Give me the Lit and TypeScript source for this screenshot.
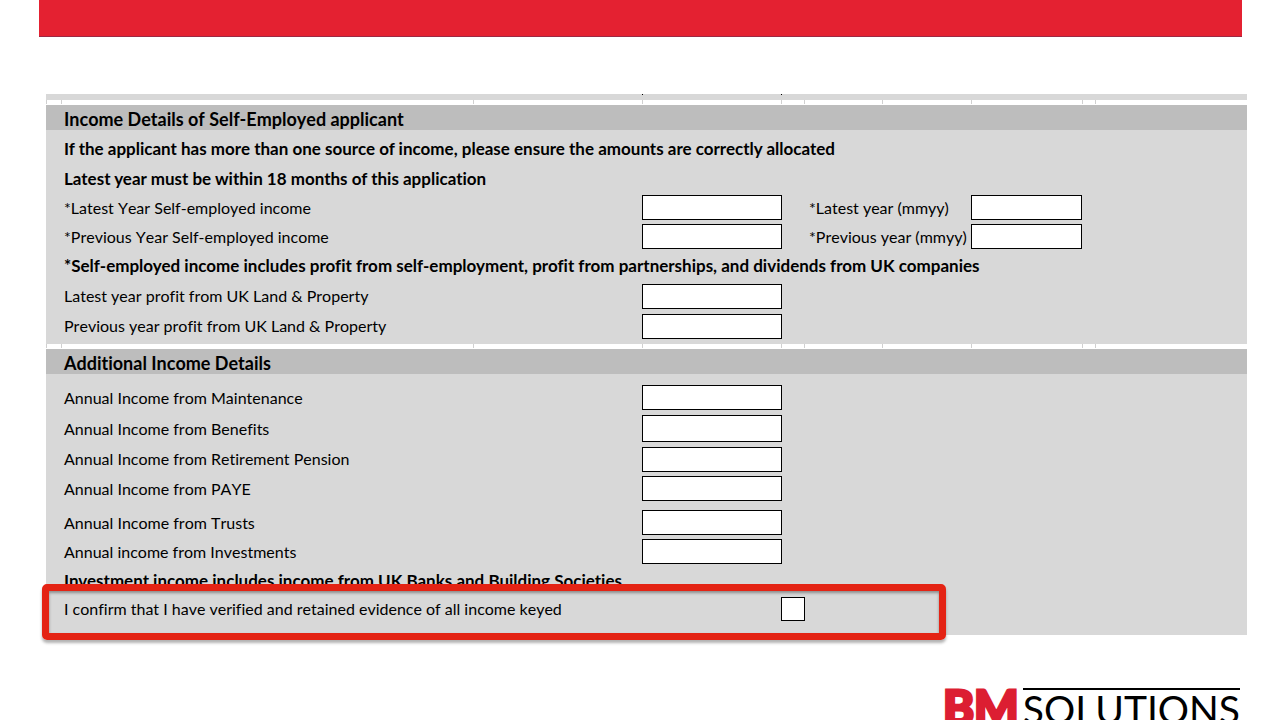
import { LitElement, html, css, nothing } from "lit";
import { customElement } from "lit/decorators.js";

type Row = {
  kind: "note" | "field" | "confirm";
  text: string;
  id?: string;
  size?: string;
  side?: { id: string; text: string };
};

const selfEmployed: Row[] = [
  { kind: "note", text: "If the applicant has more than one source of income, please ensure the amounts are correctly allocated" },
  { kind: "note", text: "Latest year must be within 18 months of this application", size: "tight" },
  { kind: "field", id: "latest-income", text: "*Latest Year Self-employed income", size: "tight", side: { id: "latest-year", text: "*Latest year (mmyy)" } },
  { kind: "field", id: "previous-income", text: "*Previous Year Self-employed income", size: "tight", side: { id: "previous-year", text: "*Previous year (mmyy)" } },
  { kind: "note", text: "*Self-employed income includes profit from self-employment, profit from partnerships, and dividends from UK companies" },
  { kind: "field", id: "latest-property", text: "Latest year profit from UK Land & Property" },
  { kind: "field", id: "previous-property", text: "Previous year profit from UK Land & Property" },
];

const additional: Row[] = [
  { kind: "field", id: "maintenance", text: "Annual Income from Maintenance", size: "roomy" },
  { kind: "field", id: "benefits", text: "Annual Income from Benefits", size: "roomy tall" },
  { kind: "field", id: "pension", text: "Annual Income from Retirement Pension" },
  { kind: "field", id: "paye", text: "Annual Income from PAYE", size: "tight" },
  { kind: "field", id: "trusts", text: "Annual Income from Trusts", size: "tight spaced" },
  { kind: "field", id: "investments", text: "Annual income from Investments", size: "tight" },
  { kind: "note", text: "Investment income includes income from UK Banks and Building Societies" },
  { kind: "confirm", id: "confirm", text: "I confirm that I have verified and retained evidence of all income keyed" },
];

@customElement("app-root")
export class AppRoot extends LitElement {
  static styles = css`
    :host {
      display: block;
      font-family: Lato, "Open Sans", sans-serif;
      font-size: 16px;
      line-height: 20px;
      font-kerning: none;
      font-variant-ligatures: none;
      color: #000;
      background: #fff;
    }
    * { box-sizing: border-box; }
    .slide {
      display: flex;
      flex-direction: column;
      height: 100vh;
      overflow: hidden;
    }
    .banner {
      flex: none;
      height: 37px;
      margin: 0 38px 57px 39px;
      background: #e42131;
      border-bottom: 1px solid #9c2844;
    }
    .sheet {
      flex: none;
      margin: 0 33px 53px 46px;
      background: #d8d8d8;
    }
    .strip {
      display: grid;
      grid-template-columns: 596fr 139fr 466fr;
      height: 6px;
    }
    .mark { height: 1px; border-left: 1px solid #000; }
    .rule {
      display: grid;
      grid-template-columns: 15fr 412fr 169fr 139fr 23fr 78fr 89fr 111fr 13fr 152fr;
      height: 5px;
      background: #fff;
    }
    .tick { height: 4px; border-left: 1px solid #d0d0d0; }
    .title {
      margin: 0;
      padding: 4px 18px 1px;
      background: #bdbdbd;
      font-size: 18px;
      line-height: 20px;
      font-weight: 700;
    }
    .first { padding: 4px 0 3px; }
    .second { padding: 8px 0 13px; }
    .row {
      position: relative;
      display: grid;
      grid-template-columns: 578fr 140fr 27fr 162fr 111fr 165fr;
      align-items: center;
      min-height: 30px;
      padding-left: 18px;
    }
    .tight { min-height: 29px; }
    .roomy { min-height: 31px; }
    .spaced { margin-top: 5px; }
    .note {
      display: flex;
      font-size: 17px;
      font-weight: 700;
      font-kerning: normal;
      white-space: nowrap;
    }
    .note p { margin: 0; }
    label { white-space: nowrap; }
    .side { grid-column: 4; }
    .box {
      width: 100%;
      height: 25px;
      margin: 0;
      padding: 0 4px;
      border: 1px solid #000;
      border-radius: 0;
      background: #fff;
      font: inherit;
      outline: none;
    }
    .tall .box { height: 27px; }
    .confirm {
      grid-template-columns: 717fr 466fr;
      min-height: 26px;
    }
    .check {
      appearance: none;
      width: 24px;
      height: 24px;
      margin: 0;
      border: 1px solid #000;
      background: #fff;
    }
    .highlight {
      position: absolute;
      inset: -12px 301px -18px -4px;
      border: 7px solid #e42314;
      border-radius: 5px;
      box-shadow: 0 3px 3px rgba(0, 0, 0, 0.3), inset 0 2px 3px rgba(0, 0, 0, 0.35);
      pointer-events: none;
    }
    .logo {
      flex: none;
      display: flex;
      align-self: flex-end;
      align-items: flex-start;
      margin-right: 40px;
      gap: 4px;
    }
    .bm {
      color: #dc1e32;
      font-size: 47px;
      line-height: 39px;
      font-weight: 900;
      -webkit-text-stroke: 3px #dc1e32;
    }
    .solutions {
      border-top: 2px solid #000;
      font-size: 39px;
      line-height: 38px;
    }
  `;

  private rule() {
    return html`<div class="rule">${Array.from({ length: 10 }, () => html`<span class="tick"></span>`)}</div>`;
  }

  private row(r: Row) {
    const size = r.size ?? "";
    if (r.kind === "note") return html`<div class="row note ${size}"><p>${r.text}</p></div>`;
    if (r.kind === "confirm")
      return html`<div class="row confirm">
        <label for=${r.id!}>${r.text}</label>
        <input class="check" type="checkbox" id=${r.id!} />
        <div class="highlight"></div>
      </div>`;
    return html`<div class="row field ${size}">
      <label for=${r.id!}>${r.text}</label>
      <input class="box" type="text" id=${r.id!} />
      ${r.side
        ? html`<label class="side" for=${r.side.id}>${r.side.text}</label>
            <input class="box" type="text" id=${r.side.id} />`
        : nothing}
    </div>`;
  }

  render() {
    return html`<main class="slide">
      <header class="banner"></header>
      <form class="sheet">
        <div class="strip"><span></span><span class="mark"></span><span class="mark"></span></div>
        ${this.rule()}
        <h2 class="title">Income Details of Self-Employed applicant</h2>
        <section class="first">${selfEmployed.map((r) => this.row(r))}</section>
        ${this.rule()}
        <h2 class="title">Additional Income Details</h2>
        <section class="second">${additional.map((r) => this.row(r))}</section>
      </form>
      <footer class="logo"><span class="bm">BM</span><span class="solutions">SOLUTIONS</span></footer>
    </main>`;
  }
}
